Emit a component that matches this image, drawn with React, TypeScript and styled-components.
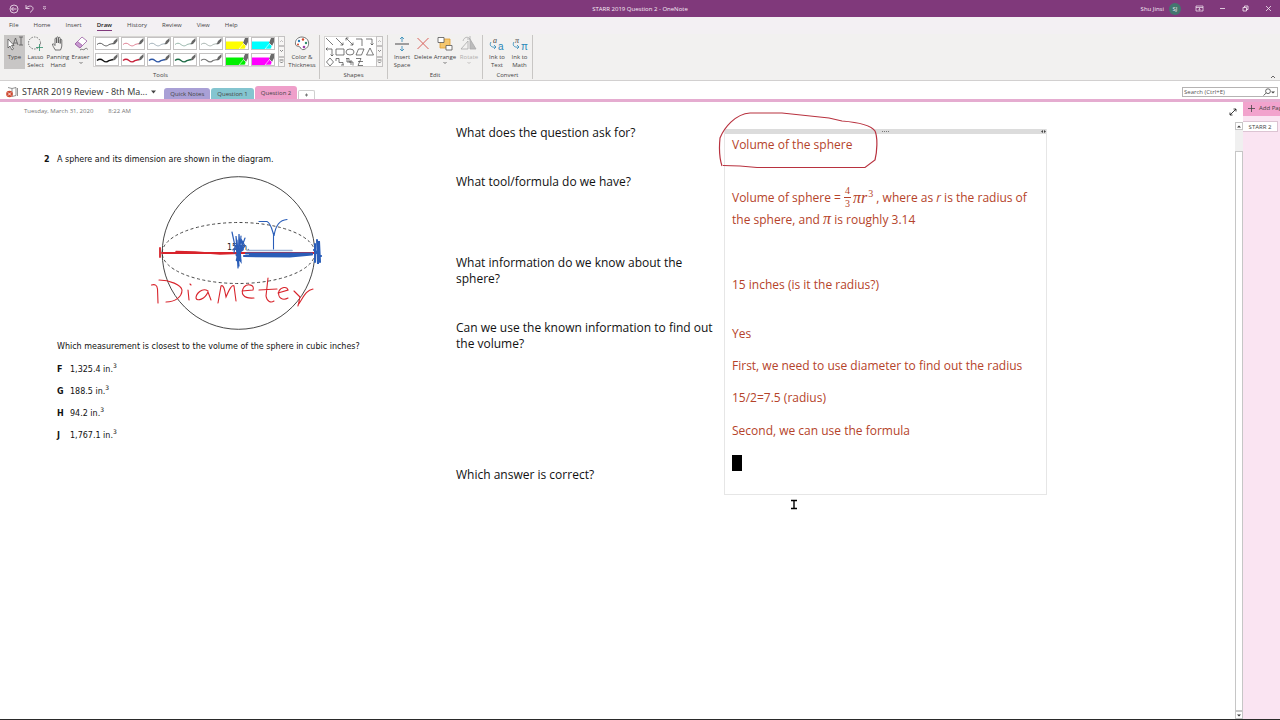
import React from 'react';
import styled, { createGlobalStyle, css } from 'styled-components';

const ui = `"Open Sans", "Noto Sans", sans-serif`;
const plum = '#80397b';

const GlobalStyle = createGlobalStyle`
  *, *::before, *::after { box-sizing: border-box; }
  body { margin: 0; background: #fff; font-family: ${ui}; font-size: 6px; line-height: 8px; color: #444; }
  button, input { font: inherit; color: inherit; margin: 0; padding: 0; border: 0; background: none; }
  button { cursor: pointer; }
  p, h1, h2, ol { margin: 0; padding: 0; }
  svg { display: block; flex: none; }
`;

const Window = styled.div`
  display: flex;
  flex-direction: column;
  min-height: 100vh;
  border-bottom: 1px solid #2a2a2a;
`;

/* ---------- title bar ---------- */
const TitleBar = styled.header`
  display: grid;
  grid-template-columns: 1fr auto 1fr;
  align-items: center;
  height: 17px;
  background: ${plum};
  color: #f6ecf5;
`;
const QuickAccess = styled.div`
  display: flex;
  align-items: center;
  gap: 6px;
  padding-left: 9px;
`;
const WindowTitle = styled.h1`
  font-size: 6px;
  font-weight: 400;
`;
const WindowControls = styled.div`
  display: flex;
  align-items: center;
  justify-content: flex-end;
  gap: 14px;
  padding-right: 7px;
`;
const Account = styled.button`
  display: flex;
  align-items: center;
  gap: 5px;
`;
const Avatar = styled.span`
  width: 12px;
  height: 12px;
  border-radius: 50%;
  background: #43766f;
  line-height: 12px;
  text-align: center;
`;
const BarButton = styled.button`
  display: grid;
  place-items: center;
  min-width: 9px;
`;

/* ---------- ribbon ---------- */
const Menu = styled.nav`
  display: flex;
  gap: 15px;
  height: 17px;
  padding: 3px 9px 0;
  background: #f3f0f3;
`;
const MenuItem = styled.button<{ $active?: boolean }>`
  height: 11px;
  line-height: 9px;
  border-bottom: 1px solid ${p => (p.$active ? plum : 'transparent')};
  ${p => p.$active && css`color: #222; font-weight: 600;`}
`;
const Ribbon = styled.section`
  display: flex;
  height: 47px;
  padding: 1px 4px 0;
  background: #f2f1f0;
  border-bottom: 1px solid #d2d0d0;
`;
const Group = styled.div`
  display: flex;
  flex-direction: column;
  justify-content: space-between;
  margin-bottom: 1px;
  padding: 0 2px;
  border-right: 1px solid #c8c6c4;
  &:first-child { padding-left: 0; }
`;
const GroupLabel = styled.div`
  text-align: center;
`;
const GroupBody = styled.div`
  display: flex;
`;
const Tool = styled.button<{ $w?: number; $active?: boolean; $off?: boolean }>`
  display: flex;
  flex-direction: column;
  align-items: center;
  width: ${p => p.$w || 21}px;
  height: 34px;
  white-space: pre;
  line-height: 8px;
  background: ${p => (p.$active ? '#c8c6c5' : 'transparent')};
  color: ${p => (p.$off ? '#b0aeac' : '#444')};
`;
const Gallery = styled.div`
  display: flex;
  height: 31px;
  margin: 1px 2px 0;
  border: 1px solid #d6d4d3;
  background: #fff;
`;
const PenGrid = styled.div`
  display: grid;
  grid-template-columns: repeat(7, 24px);
  gap: 3px 2px;
  padding: 0 4px 0 1px;
`;
const PenButton = styled.button`
  height: 13px;
  border: 1px solid #c4c2c2;
  background: #fff;
`;
const ShapeGrid = styled.div`
  display: grid;
  grid-template-columns: repeat(5, 10px);
  grid-auto-rows: 10px;
  padding-right: 2px;
`;
const Scroller = styled.div`
  display: grid;
  grid-template-rows: repeat(3, 1fr);
  width: 7px;
  margin: -1px;
`;
const ScrollStep = styled.button`
  display: grid;
  place-items: center;
  border: 1px solid #c4c2c2;
  background: #f7f6f5;
`;
const CollapseButton = styled.button`
  align-self: flex-end;
  margin-left: auto;
  padding-bottom: 1px;
`;

/* ---------- notebook bar ---------- */
const NotebookBar = styled.div`
  display: flex;
  align-items: flex-end;
  height: 21px;
  padding-left: 6px;
  border-bottom: 3px solid #e5acd0;
`;
const NotebookButton = styled.button`
  display: flex;
  align-items: center;
  gap: 4px;
  height: 14px;
  margin-right: 8px;
  font-size: 9px;
  color: #333;
`;
const SectionTab = styled.button<{ $color: string; $active?: boolean }>`
  height: ${p => (p.$active ? 13 : 11)}px;
  margin-right: 1px;
  padding: 0 6px;
  border-radius: 3px 3px 0 0;
  background: ${p => p.$color};
`;
const NewSection = styled.button`
  width: 17px;
  height: 9px;
  border: 1px solid #cfcfcf;
  border-bottom: 0;
  border-radius: 2px 2px 0 0;
  color: #777;
`;
const SearchBox = styled.label`
  display: flex;
  align-items: center;
  width: 96px;
  height: 10px;
  margin: 0 2px 2px auto;
  padding: 0 2px 0 1px;
  border: 1px solid #b5b3b3;
`;
const SearchInput = styled.input`
  flex: 1;
  min-width: 0;
  height: 8px;
  outline: 0;
  &::placeholder { color: #555; opacity: 1; }
`;

/* ---------- page ---------- */
const Workspace = styled.div`
  display: flex;
  flex: 1;
`;
const Canvas = styled.main`
  position: relative;
  flex: 1;
  min-width: 0;
  color: #111;
`;
const DateLine = styled.div`
  display: flex;
  gap: 15px;
  width: 176px;
  padding: 5px 0 0 24px;
  color: #767676;
`;
const ExpandButton = styled.button`
  position: absolute;
  top: 6px;
  right: -2px;
`;
const Problem = styled.section`
  position: absolute;
  left: 44px;
  top: 52px;
  font: 8px/12px "DejaVu Sans", sans-serif;
  white-space: nowrap;
`;
const Prompt = styled.p`
  display: flex;
`;
const Mark = styled.b`
  width: 13px;
`;
const Diagram = styled.svg`
  margin: 7px 0 8px 104px;
`;
const Ask = styled.p`
  padding-left: 13px;
`;
const Choices = styled.ol`
  padding: 6px 0 0 13px;
  list-style: none;
`;
const Choice = styled.li`
  display: flex;
  height: 22px;
  line-height: 22px;
`;
const Cube = styled.sup`
  font-size: 6px;
  line-height: 0;
`;
const NoteText = css`
  font: 12px/16px "Open Sans", sans-serif;
`;
const Questions = styled.section`
  position: absolute;
  left: 456px;
  top: 23px;
  width: 264px;
  ${NoteText}
`;
const Para = styled.p<{ $after?: number }>`
  margin-bottom: ${p => p.$after || 0}px;
`;
const Answers = styled.section`
  position: absolute;
  left: 724px;
  top: 27px;
  width: 323px;
  height: 366px;
  border: 1px solid #e6e6e6;
  border-top: 0;
  color: #b5432a;
  ${NoteText}
`;
const Grip = styled.div`
  display: flex;
  align-items: center;
  height: 5px;
  margin-bottom: 3px;
  background: #dcdcdc;
`;
const AnswerBody = styled.div`
  padding: 0 7px;
`;
const FormulaLine = styled.div`
  display: flex;
  align-items: center;
  height: 26px;
  white-space: pre;
`;
const Fraction = styled.span`
  display: grid;
  margin-right: 2px;
  padding-bottom: 1px;
  font: 10px/12px "Liberation Serif", serif;
  text-align: center;
  & > :first-child { padding: 0 1px; border-bottom: 1px solid; }
`;
const MathText = styled.span`
  font: italic 16px/16px "Liberation Serif", serif;
`;
const Power = styled.sup`
  padding-left: 1px;
  font: 10px/0 "Liberation Serif", serif;
`;
const Caret = styled.div`
  width: 10px;
  height: 16px;
  background: #000;
`;
const Ink = styled.svg`
  position: absolute;
  left: 0;
  top: 0;
  pointer-events: none;
`;

const ScrollBar = styled.div`
  display: flex;
  flex-direction: column;
  width: 8px;
  margin-top: 20px;
  background: #f0f0f0;
`;
const ScrollArrow = styled.button`
  display: grid;
  place-items: center;
  height: 8px;
  border: 1px solid #c6c6c6;
  background: #fff;
`;
const Thumb = styled.div`
  flex: 1;
  margin-top: 21px;
  border: 1px solid #c6c6c6;
  background: #fff;
`;
const Pages = styled.aside`
  width: 37px;
  overflow: hidden;
  background: #fae4f2;
`;
const AddPage = styled.button`
  display: flex;
  align-items: center;
  gap: 4px;
  height: 14px;
  width: 100%;
  padding: 0 0 2px 5px;
  background: #f2a3cd;
  white-space: nowrap;
`;
const PageTab = styled.button`
  width: 35px;
  height: 11px;
  margin-top: 5px;
  border: 1px solid #dcc4d3;
  border-left: 0;
  background: #fff;
`;

type IconProps = { d: string; w?: number; h?: number; c?: string; sw?: number; fill?: string };
const Icon = ({ d, w = 8, h = 8, c = 'currentColor', sw = 0.8, fill = 'none' }: IconProps) => (
  <svg width={w} height={h} viewBox={`0 0 ${w} ${h}`} fill={fill} stroke={c} strokeWidth={sw} aria-hidden="true">
    <path d={d} />
  </svg>
);

const Art = ({ children }: { children: React.ReactNode }) => (
  <svg width="20" height="18" viewBox="0 0 20 18" fill="none" stroke="#555" strokeWidth="0.8" aria-hidden="true">{children}</svg>
);

const pens = [
  ['#333', 0.8], ['#d4526b', 0.7], ['#7f93a0', 0.7], ['#6f9a8a', 0.7], ['#8a9a94', 0.7], ['#ffff00', 0], ['#00ffff', 0],
  ['#111', 1.3], ['#c8203a', 1.3], ['#2d55a5', 1.3], ['#1d6b45', 1.3], ['#777', 1.1], ['#00f000', 0], ['#ff00ff', 0],
] as [string, number][];

const Pen = ({ color, weight }: { color: string; weight: number }) => (
  <PenButton aria-label={`Pen ${color}`}>
    <svg width="22" height="11" viewBox="0 0 22 11" fill="none" aria-hidden="true">
      {weight ? (
        <>
          <path d="M1 6.5C3 4.8 5 4.8 7 6.5S11 8.5 13 6.5L17 5.5" stroke={color} strokeWidth={weight} />
          <path d="M16.500 6.500L18 3L21.500 0V3L19 6Z" fill="#666" />
        </>
      ) : (
        <>
          <path d="M0 3.500H17V11H0Z" fill={color} />
          <path d="M17 5L19 0H22V4L20 8Z" fill="#6a6a6a" />
          <path d="M13 11L17.500 5.500L20 8L19 11Z" fill={color} stroke="#fff" strokeWidth="0.6" />
        </>
      )}
    </svg>
  </PenButton>
);

const Steps = () => (
  <Scroller>
    <ScrollStep aria-label="Previous row"><Icon w={5} h={4} d="M1 3L2.500 1.500L4 3" c="#999" sw={0.6} /></ScrollStep>
    <ScrollStep aria-label="Next row"><Icon w={5} h={4} d="M1 1L2.500 2.500L4 1" sw={0.6} /></ScrollStep>
    <ScrollStep aria-label="More"><Icon w={5} h={5} d="M0.500 1H4.500M1 2.500L2.500 4L4 2.500" sw={0.7} /></ScrollStep>
  </Scroller>
);

const shapes = [
  'M1 1L8 8', 'M1 1L8 8M8 5.500V8H5.500', 'M1 1L8 8M8 5.500V8H5.500M1 3.500V1H3.500', 'M1 2H7V9', 'M1 2H7V8M5.500 6.500L7 8L8.500 6.500',
  'M1 2H7V9M2.500 0.500L1 2L2.500 3.500M5.500 7.500L7 9L8.500 7.500', 'M1 2H9V8H1Z', 'M1 5A4 3 0 1 0 9 5A4 3 0 1 0 1 5', 'M1 8L3.500 2H9L6.500 8Z', 'M5 1L8.500 8H1.500Z',
  'M5 1L8.500 5L5 9L1.500 5Z', 'M1 1.500H4V5.500H8M1 1.500V4M6 8H9M8 5.500V8', 'M1 1.500H4V5H8V8.500M2 1.500V5H6M6 3V8', 'M1 1.500H6L3 8.500H8M3 4.500H8', '',
];

const Down = () => <Icon w={6} h={4} d="M1.500 1L3 2.500L4.500 1" sw={0.7} />;
const sky = '#2b88b8';

function RibbonBar() {
  return (
    <Ribbon>
      <Group>
        <GroupBody>
          <Tool $active>
            <Art><path d="M8 10L10.500 3L13 10M9 8H12M14 2H18M16 2V10M14 10H18" /><path d="M3 4V13L5 11L7 15L8.500 14L6.500 10.500H9Z" fill="#fff" stroke="#333" strokeWidth="0.6" /></Art>
            Type
          </Tool>
          <Tool>
            <Art><circle cx="8.500" cy="8" r="6" strokeDasharray="1.500 1.200" /><path d="M13.500 9V16M10 12.500H17" stroke="#2f8f6b" /></Art>
            {'Lasso\nSelect'}
          </Tool>
          <Tool $w={24}>
            <Art><path d="M7 14.500C5.500 12 4.500 10.500 4.500 9C5.500 8.500 6.500 9.500 7 10.500V4C7 2.800 8.600 2.800 8.600 4V8V2.800C8.600 1.500 10.400 1.500 10.400 2.800V8V3.300C10.400 2 12.200 2 12.200 3.300V8.500V5C12.200 4 13.800 4 13.800 5V11C13.800 12.500 13 13.500 12.500 15H7Z" /></Art>
            {'Panning\nHand'}
          </Tool>
          <Tool>
            <Art><path d="M4 9L11 2L16 6L9 13Z" fill="#fff" stroke="#9a5fa5" /><path d="M4 9L6.500 6.500L11.500 10.500L9 13Z" fill="#c99bd0" stroke="#9a5fa5" /><path d="M9 15C11 13 12 16 14 14S16 15 17 14" /></Art>
            Eraser
            <Down />
          </Tool>
          <Gallery>
            <PenGrid>{pens.map(([c, w]) => <Pen key={c} color={c} weight={w} />)}</PenGrid>
            <Steps />
          </Gallery>
          <Tool $w={30}>
            <Art><path d="M10 2C5 2 3 6 3.500 9C4 12 7 11 8 12C9 14 10 15 12 14.500C16 13 17 10 16.500 7C16 4 13 2 10 2Z" fill="#fff" /><circle cx="7" cy="6" r="1.200" fill="#2b7cb8" stroke="none" /><circle cx="11" cy="4.500" r="1.200" fill="#d24726" stroke="none" /><circle cx="14" cy="8" r="1.200" fill="#2f8f6b" stroke="none" /><circle cx="12" cy="12" r="1.300" fill="#9a3fa5" stroke="none" /><circle cx="6" cy="9.500" r="1" fill="#d24726" stroke="none" /></Art>
            {'Color &\nThickness'}
          </Tool>
        </GroupBody>
        <GroupLabel>Tools</GroupLabel>
      </Group>
      <Group>
        <GroupBody>
          <Gallery>
            <ShapeGrid>{shapes.map((d, i) => <Icon key={i} w={10} h={10} d={d} sw={0.7} />)}</ShapeGrid>
            <Steps />
          </Gallery>
        </GroupBody>
        <GroupLabel>Shapes</GroupLabel>
      </Group>
      <Group>
        <GroupBody>
          <Tool $w={24}>
            <Art><path d="M3 9H17" stroke="#666" strokeWidth="1.200" /><path d="M10 2V7M8 4L10 2L12 4M10 11V16M8 14L10 16L12 14" stroke={sky} /></Art>
            {'Insert\nSpace'}
          </Tool>
          <Tool $w={18}>
            <Art><path d="M4.500 3L15.500 14M15.500 3L4.500 14" stroke="#d9605a" strokeWidth="1" /></Art>
            Delete
          </Tool>
          <Tool $w={26}>
            <Art><path d="M5 4H15V13H5Z" fill="#f5c76e" stroke="#e0a030" /><path d="M3 2.500H9V7.500H3ZM11 10.500H17V15H11Z" fill="#fff" /></Art>
            Arrange
            <Down />
          </Tool>
          <Tool $w={22} $off>
            <Art><path d="M2 14L9 6V14Z" stroke="#aaa" /><path d="M11 14V4L17 14Z" fill="#bbb" stroke="#aaa" /><path d="M4 6C5 2 9 1 11 4M11 1V4H8" stroke="#aaa" /></Art>
            Rotate
            <Down />
          </Tool>
        </GroupBody>
        <GroupLabel>Edit</GroupLabel>
      </Group>
      <Group>
        <GroupBody>
          <Tool $w={24}>
            <Art><text x="6" y="8" fontSize="8" fontStyle="italic" fontFamily="Liberation Serif" fill="#444" stroke="none">a</text><text x="11" y="15" fontSize="10" fontFamily="Liberation Sans" fill={sky} stroke="none">a</text><path d="M4 7C2 10 4 13 9 12M7 10L9 12L7 14" stroke={sky} /></Art>
            {'Ink to\nText'}
          </Tool>
          <Tool>
            <Art><text x="5" y="8" fontSize="8" fontStyle="italic" fontFamily="Liberation Serif" fill="#444" stroke="none">π</text><text x="11" y="15" fontSize="10" fontFamily="Liberation Sans" fill={sky} stroke="none">π</text><path d="M4 7C2 10 4 13 9 12M7 10L9 12L7 14" stroke={sky} /></Art>
            {'Ink to\nMath'}
          </Tool>
        </GroupBody>
        <GroupLabel>Convert</GroupLabel>
      </Group>
      <CollapseButton aria-label="Collapse ribbon"><Icon w={6} h={5} d="M1 4L3 2L5 4" /></CollapseButton>
    </Ribbon>
  );
}

const blueInk = '#2a5db8';
const redInk = '#d8242c';

export default function App() {
  return (
    <Window>
      <GlobalStyle />
      <TitleBar>
        <QuickAccess>
          <BarButton aria-label="Back"><Icon w={10} h={10} d="M5 1A4 4 0 1 0 5 9A4 4 0 1 0 5 1M2.500 5H7.500M4.500 3L2.500 5L4.500 7" /></BarButton>
          <BarButton aria-label="Undo"><Icon w={9} h={9} d="M1 1V4.500H4.500M1 4.500C3 1 8 1.500 8 4.500C8 6.500 6.500 7 5 8.500" /></BarButton>
          <BarButton aria-label="Customize"><Icon w={5} h={5} d="M1 0.500H4M1 2L2.500 3.500L4 2Z" sw={0.5} /></BarButton>
        </QuickAccess>
        <WindowTitle>STARR 2019 Question 2 - OneNote</WindowTitle>
        <WindowControls>
          <Account>Shu Jinsi<Avatar>SJ</Avatar></Account>
          <BarButton aria-label="Ribbon display"><Icon w={9} h={7} d="M1 1H8V6H1ZM1 2.500H8M4.500 5.500V3.500M3.500 4.500L4.500 3.500L5.500 4.500" sw={0.7} /></BarButton>
          <BarButton aria-label="Minimize"><Icon w={7} h={7} d="M1 3.500H6" /></BarButton>
          <BarButton aria-label="Restore"><Icon w={7} h={7} d="M1 2.500H4.500V6H1ZM2.500 2.500V1H6V4.500H4.500" /></BarButton>
          <BarButton aria-label="Close"><Icon w={7} h={7} d="M1 1L6 6M6 1L1 6" /></BarButton>
        </WindowControls>
      </TitleBar>
      <Menu>
        {['File', 'Home', 'Insert', 'Draw', 'History', 'Review', 'View', 'Help'].map(m => (
          <MenuItem key={m} $active={m === 'Draw'}>{m}</MenuItem>
        ))}
      </Menu>
      <RibbonBar />
      <NotebookBar>
        <NotebookButton>
          <svg width="12" height="12" viewBox="0 0 12 12" fill="none" aria-hidden="true">
            <path d="M2 1.500L6 2.500V10M6 2.500L10 1.500V9.500L6 10.500M11.500 2V10" stroke="#777" strokeWidth="0.8" />
            <circle cx="3.500" cy="8" r="3.300" fill="#cf4a32" />
            <path d="M2 6.500L5 9.500M5 6.500L2 9.500" stroke="#fff" strokeWidth="0.9" />
          </svg>
          STARR 2019 Review - 8th Ma...
          <Icon w={5} h={4} d="M0 0.500H5L2.500 3.500Z" fill="#444" c="none" />
        </NotebookButton>
        <SectionTab $color="#a9a0d6">Quick Notes</SectionTab>
        <SectionTab $color="#84c5d0">Question 1</SectionTab>
        <SectionTab $color="#ef9fca" $active>Question 2</SectionTab>
        <NewSection aria-label="New section"><Icon w={15} h={8} d="M7.500 2.500V5.500M6 4H9" sw={1} /></NewSection>
        <SearchBox>
          <SearchInput aria-label="Search" placeholder="Search (Ctrl+E)" />
          <Icon w={8} h={8} d="M5 0.800A2.400 2.400 0 1 0 5 5.600A2.400 2.400 0 1 0 5 0.800M3.200 5L0.500 7.500" />
          <Icon w={4} h={3} d="M0 0.500H4L2 2.500Z" fill="#444" c="none" />
        </SearchBox>
      </NotebookBar>
      <Workspace>
        <Canvas>
          <DateLine><time>Tuesday, March 31, 2020</time><time>8:22 AM</time></DateLine>
          <ExpandButton aria-label="Full page"><Icon w={8} h={8} d="M1 7L7 1M4.500 1H7V3.500M1 4.500V7H3.500" /></ExpandButton>

          <Problem>
            <Prompt><Mark>2</Mark>A sphere and its dimension are shown in the diagram.</Prompt>
            <Diagram width="180" height="160" viewBox="148 173 180 160" fill="none" strokeLinecap="round">
              <g stroke="#333" strokeWidth="0.9">
                <circle cx="238.500" cy="253" r="76.300" />
                <ellipse cx="238.500" cy="253" rx="76.300" ry="30.500" strokeDasharray="3 2.500" strokeLinecap="butt" />
              </g>
              <text x="227" y="250" fontSize="8" fill="#222">15 in.</text>
              <g stroke={redInk}>
                <path d="M160 248V257M162 253H318" strokeWidth="1.800" />
                <path d="M176 251.500L195 252L220 254L246 253" strokeWidth="1.400" />
                <g strokeWidth="1.100">
                  <path d="M151.500 285C155 284 157 285 157.500 289L158 303" />
                  <path d="M159 280C170 280 181 285 182 290C182 297 175 302 166 302" />
                  <path d="M188 290L189 300M190 284L191 285" />
                  <path d="M208 291C202 287 196 294 196 298C197 302 205 299 208 292L211 300" />
                  <path d="M218 303L221 286C224 284 225 292 226 297C229 290 232 284 234 286L236 301" />
                  <path d="M242 291L253 290C255 285 248 283 244 287C240 293 243 299 254 298" />
                  <path d="M268 278L266 296C267 302 271 303 274 301M259 290L277 289" />
                  <path d="M278 293L288 290C287 286 281 287 279 291C277 298 283 301 288 298" />
                  <path d="M294 291L300 297L298 306M298 305C303 298 306 290 313 289" />
                </g>
              </g>
              <path d="M247 250.500H292" stroke="#9bb4d6" strokeWidth="1.600" />
              <g stroke={blueInk}>
                <path d="M246 253.500L312 253.500M244 256L290 256.500L312 254.500M250 255H308" strokeWidth="2.200" />
                <path d="M232 232L235 246L234 253M233 250L237 244L236 236L238 268L239 234L241 262L236 255L243 250L241 239L245 246L240 252L245 238M238 268L241 236M237 240L239 266" strokeWidth="1.200" />
                <path d="M236.500 248L240 260M237 260L241 246" strokeWidth="2.500" />
                <path d="M315 244V262M317 240L318 264L319 241L320 262M314 250L321 256" strokeWidth="2" />
                <path d="M259 221.500L267 221.500C271 223 272 230 274 236C275 229 278 220 287 219.500M273.500 233V249" strokeWidth="1.100" />
              </g>
            </Diagram>
            <Ask>Which measurement is closest to the volume of the sphere in cubic inches?</Ask>
            <Choices>
              {[['F', '1,325.4'], ['G', '188.5'], ['H', '94.2'], ['J', '1,767.1']].map(([k, v]) => (
                <Choice key={k}><Mark>{k}</Mark><span>{v} in.<Cube>3</Cube></span></Choice>
              ))}
            </Choices>
          </Problem>

          <Questions>
            <Para $after={33}>What does the question ask for?</Para>
            <Para $after={65}>What tool/formula do we have?</Para>
            <Para $after={33}>What information do we know about the sphere?</Para>
            <Para $after={115}>Can we use the known information to find out the volume?</Para>
            <Para>Which answer is correct?</Para>
          </Questions>

          <Answers>
            <Grip>
              <svg width="100%" height="5" aria-hidden="true">
                <path d="M157 2.500H165" stroke="#777" strokeDasharray="1 1" />
                <path d="M316 2.500L318 1V4ZM321 2.500L319 1V4Z" fill="#444" />
              </svg>
            </Grip>
            <AnswerBody>
              <Para $after={32}>Volume of the sphere</Para>
              <FormulaLine>
                {'Volume of sphere = '}
                <Fraction><span>4</span><span>3</span></Fraction>
                <MathText>πr<Power>3</Power></MathText>
                <span>{' , where as '}<i>r</i>{' is the radius of'}</span>
              </FormulaLine>
              <Para $after={49}>the sphere, and <MathText>π</MathText> is roughly 3.14</Para>
              <Para $after={33}>15 inches (is it the radius?)</Para>
              <Para $after={16}>Yes</Para>
              <Para $after={16}>First, we need to use diameter to find out the radius</Para>
              <Para $after={17}>15/2=7.5 (radius)</Para>
              <Para $after={16}>Second, we can use the formula</Para>
              <Caret />
            </AnswerBody>
          </Answers>

          <Ink width="1060" height="420" viewBox="0 102 1060 420" fill="none" aria-hidden="true">
            <path d="M722 166C720 160 719 148 720 138C724 128 735 114 750 113H782L829 118L842 121C855 122 870 124 875 131C878 138 877 152 875 160L865 167.500H757L740 166L723 165.500" stroke="#b8323f" strokeWidth="1.200" />
            <path d="M791 500.500H797M794 500.500V508.500M791 508.500H797" stroke="#000" strokeWidth="1.400" />
          </Ink>
        </Canvas>
        <ScrollBar>
          <ScrollArrow aria-label="Scroll up"><Icon w={4} h={3} d="M0 2.500H4L2 0.500Z" fill="#333" c="none" /></ScrollArrow>
          <Thumb />
          <ScrollArrow aria-label="Scroll down"><Icon w={4} h={3} d="M0 0.500H4L2 2.500Z" fill="#333" c="none" /></ScrollArrow>
        </ScrollBar>
        <Pages>
          <AddPage><Icon w={7} h={7} d="M3.500 0V7M0 3.500H7" />Add Page</AddPage>
          <PageTab>STARR 2</PageTab>
        </Pages>
      </Workspace>
    </Window>
  );
}
